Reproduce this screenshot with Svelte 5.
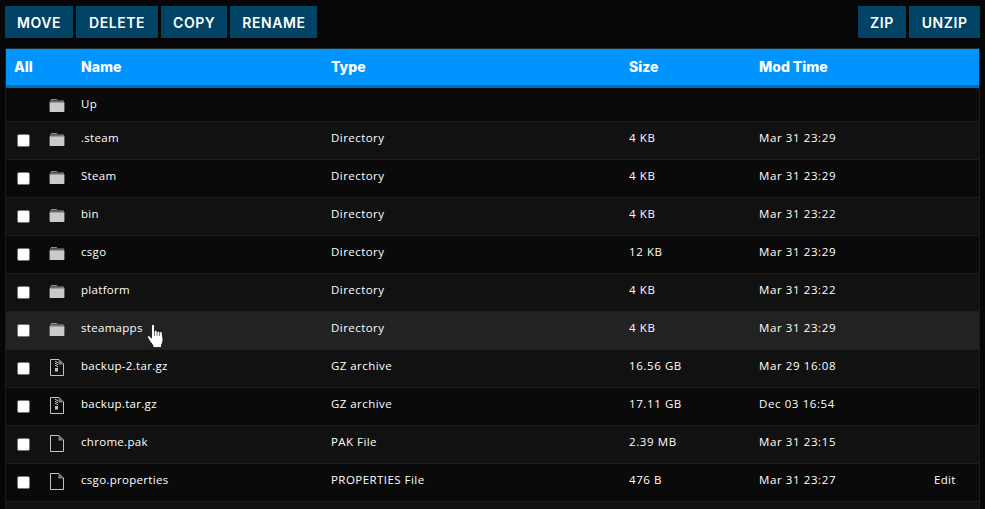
<script>
	const rows = [
		{ name: '.steam', type: 'Directory', size: '4 KB', time: 'Mar 31 23:29', icon: 'folder' },
		{ name: 'Steam', type: 'Directory', size: '4 KB', time: 'Mar 31 23:29', icon: 'folder' },
		{ name: 'bin', type: 'Directory', size: '4 KB', time: 'Mar 31 23:22', icon: 'folder' },
		{ name: 'csgo', type: 'Directory', size: '12 KB', time: 'Mar 31 23:29', icon: 'folder' },
		{ name: 'platform', type: 'Directory', size: '4 KB', time: 'Mar 31 23:22', icon: 'folder' },
		{ name: 'steamapps', type: 'Directory', size: '4 KB', time: 'Mar 31 23:29', icon: 'folder', hover: true },
		{ name: 'backup-2.tar.gz', type: 'GZ archive', size: '16.56 GB', time: 'Mar 29 16:08', icon: 'zip' },
		{ name: 'backup.tar.gz', type: 'GZ archive', size: '17.11 GB', time: 'Dec 03 16:54', icon: 'zip' },
		{ name: 'chrome.pak', type: 'PAK File', size: '2.39 MB', time: 'Mar 31 23:15', icon: 'file' },
		{ name: 'csgo.properties', type: 'PROPERTIES File', size: '476 B', time: 'Mar 31 23:27', icon: 'file', edit: true }
	];
</script>

{#snippet icon(kind)}
	{#if kind === 'folder'}
		<svg class="ico folder" width="16" height="13" viewBox="0 0 16 13">
			<path d="M2 0h5.500l1 1H2z" fill="#8f8f8f" />
			<path d="M1 1.600h14v1H1z" fill="#b0b0b0" />
			<path d="M.6 3.200h14.800v9a.8.8 0 0 1-.8.8H1.400a.8.8 0 0 1-.8-.8z" fill="#cacaca" />
		</svg>
	{:else}
		<svg class="ico doc" width="14" height="17" viewBox="0 0 14 17">
			<path d="M.5.5h8.500l4.500 4.500v11.500H.5z" fill="none" stroke="#c4c4c4" />
			<path d="M8.500 1v4.500H13z" fill="#8a8a8a" />
			{#if kind === 'zip'}
				<path d="M5 2h1.500v1H5zM6.500 3H8v1H6.500zM5 4h1.500v1H5zM6.500 5H8v1H6.500zM5 6h1.500v1H5zM6.500 7H8v1H6.500z" fill="#c4c4c4" />
				<path d="M5 9h3v3.500H5z" fill="#c4c4c4" />
			{/if}
		</svg>
	{/if}
{/snippet}

<div class="page">
	<div class="toolbar">
		<button>MOVE</button>
		<button class="wide">DELETE</button>
		<button>COPY</button>
		<button>RENAME</button>
		<span class="spacer"></span>
		<button class="wider">ZIP</button>
		<button class="wider">UNZIP</button>
	</div>

	<div class="table">
		<div class="row head">
			<span class="check">All</span>
			<span></span>
			<span>Name</span>
			<span>Type</span>
			<span>Size</span>
			<span>Mod Time</span>
			<span></span>
		</div>
		<div class="row up">
			<span></span>
			<span class="icon-cell">{@render icon('folder')}</span>
			<span class="name">Up</span>
			<span></span>
			<span></span>
			<span></span>
			<span></span>
		</div>
		{#each rows as row, i}
			<div class="row" class:odd={i % 2 === 0} class:hover={row.hover}>
				<span class="check"><i class="box"></i></span>
				<span class="icon-cell">{@render icon(row.icon)}</span>
				<span class="name">{row.name}</span>
				<span class="type">{row.type}</span>
				<span class="num">{row.size}</span>
				<span class="num">{row.time}</span>
				<span>{row.edit ? 'Edit' : ''}</span>
			</div>
		{/each}
		<div class="row odd"></div>
	</div>

	<!-- pointer cursor over the steamapps row -->
	<svg class="cursor" width="17" height="24" viewBox="0 0 17 24">
		<path d="M4.500 1.800a1.500 1.500 0 0 1 3 0V7.500a1.300 1.300 0 0 1 2.600 0V8a1.300 1.300 0 0 1 2.500.3a1.300 1.300 0 0 1 2.500.5L16 15c0 3-.8 4.500-1.500 6v2.500H6V21.500C4 19 2 16 .6 13.500c-.6-1.300.8-2.300 1.900-1.400l2 1.900z" fill="#fff" stroke="#0c0c0c" stroke-width=".8" />
		<path d="M7.500 7.500V12M10.100 8V12M12.600 8.300V12" stroke="#444" stroke-width=".7" fill="none" />
	</svg>
</div>

<style>
	:global(body) {
		background: #060606;
		overflow: hidden;
	}

	.page {
		position: relative;
		height: 509px;
		overflow: hidden;
		padding: 6px 5px 0;
		box-sizing: border-box;
		color: #fff;
		font-family: 'Open Sans', sans-serif;
	}

	.toolbar {
		display: flex;
		gap: 3px;
		height: 32px;
	}

	.spacer {
		flex: 1;
	}

	button {
		border: 0;
		padding: 0 12px;
		background: #004364;
		color: #fff;
		font-family: Inter, sans-serif;
		font-size: 14px;
		font-weight: 600;
		letter-spacing: 0.55px;
	}

	button.wide {
		padding: 0 13px;
	}

	button.wider {
		padding: 0 12.5px;
	}

	.table {
		margin-top: 10px;
		border-left: 1px solid #1c1c1c;
		border-right: 1px solid #1c1c1c;
		font-size: 11.5px;
		font-weight: 500;
		letter-spacing: 0.3px;
	}

	.row {
		display: grid;
		grid-template-columns: 43px 32px 250px 298px 130px 175px 1fr;
		align-items: center;
		height: 30px;
		padding-bottom: 7px;
		border-bottom: 1px solid #1e1e1e;
		background: #0a0a0a;
	}

	.row.odd {
		background: #111;
	}

	.row.hover {
		background: #222;
	}

	.row.up {
		height: 30px;
		padding-bottom: 3px;
	}

	.row.head {
		height: 35px;
		padding: 0 0 1px;
		border-top: 1px solid #1c2a33;
		border-bottom: 3px solid #0070b0;
		background: #0094ff;
		font-family: Inter, sans-serif;
		font-size: 14px;
		font-weight: 800;
		letter-spacing: 0;
	}

	.type {
		letter-spacing: 0.45px;
	}

	.num {
		letter-spacing: 0.6px;
	}

	.check {
		padding-left: 8px;
	}

	.row:not(.head) .check {
		padding-left: 11px;
		display: flex;
	}

	.box {
		display: block;
		width: 11px;
		height: 11px;
		margin-top: 6px;
		background: #fff;
		border: 1px solid #767676;
		border-radius: 2px;
	}

	.icon-cell {
		display: flex;
	}

	.ico {
		display: block;
		margin-top: 5px;
	}

	.doc {
		margin-top: 4px;
		margin-left: 1px;
	}

	.cursor {
		position: absolute;
		left: 147px;
		top: 324px;
	}
</style>
